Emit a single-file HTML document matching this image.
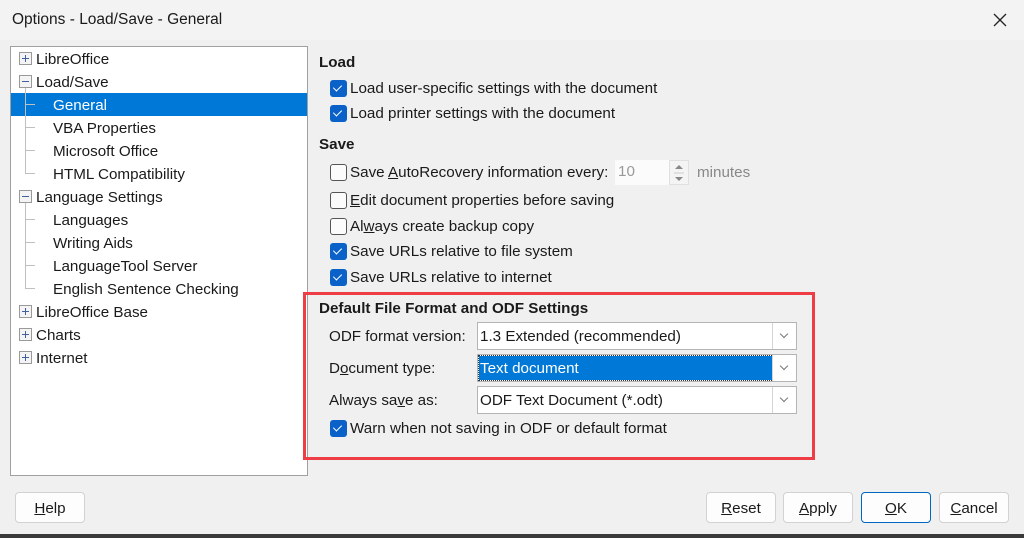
<!DOCTYPE html>
<html><head><style>
*{box-sizing:border-box;margin:0;padding:0}
body{width:1024px;height:538px;background:#f0f0f0;font-family:"Liberation Sans",sans-serif;font-size:15.2px;color:#1a1a1a;position:relative;overflow:hidden}
.a{position:absolute;white-space:nowrap}
.title{left:12px;top:11px;font-size:15.5px;color:#1a1a1a}
.titlebar{position:absolute;left:0;top:0;width:1024px;height:40px;background:#f3f3f3}
.tree{position:absolute;left:10px;top:46px;width:298px;height:430px;background:#fff;border:1px solid #a0a0a0}
.row{position:absolute;height:23px;line-height:25px;white-space:nowrap}
.exp{position:absolute;left:8px;width:13px;height:13px;border:1px solid #9a9a9a;background:#f4f4f4}
.exp:before{content:"";position:absolute;left:2px;top:5px;width:7px;height:1px;background:#4060a0}
.exp.p:after{content:"";position:absolute;left:5px;top:2px;width:1px;height:7px;background:#4060a0}
.vl{position:absolute;left:14px;width:1px;background:#c0c0c0}
.hl{position:absolute;left:14px;width:10px;height:1px;background:#c0c0c0}
.cb{position:absolute;width:17px;height:17px;border-radius:3px}
.on{background:#0a62c8}
.on:after{content:"";position:absolute;left:5px;top:3px;width:4px;height:7px;border:solid #fff;border-width:0 1.5px 1.5px 0;transform:rotate(45deg)}
.off{border:1px solid #555;background:#fbfbfb}
.b{font-weight:bold}
.dd{position:absolute;left:477px;width:320px;height:28px;background:#fff;border:1px solid #b4b4b4}
.dd .t{position:absolute;left:2px;top:4px;line-height:20px}
.dd .btn{position:absolute;right:0;top:0;width:24px;height:26px;border-left:1px solid #d4d4d4;background:#fff}
.dd .btn:after{content:"";position:absolute;left:8px;top:8px;width:5px;height:5px;border:solid #777;border-width:0 1px 1px 0;transform:rotate(45deg)}
.pb{position:absolute;top:492px;height:31px;background:#fdfdfd;border:1px solid #d2d2d2;border-radius:4px;text-align:center;line-height:31px}
u{text-decoration:underline}
.r .a{margin-top:1px}
</style></head><body>
<div class="titlebar"></div>
<div class="a title">Options - Load/Save - General</div>
<svg class="a" style="left:992px;top:12px" width="16" height="16"><path d="M2 2L14 14M14 2L2 14" stroke="#222" stroke-width="1.3"/></svg>

<div class="tree">
 <div class="row" style="top:0;left:0;width:296px"><div class="exp p" style="top:5px"></div><span style="position:absolute;left:25px">LibreOffice</span></div>
 <div class="row" style="top:23px;left:0;width:296px"><div class="exp" style="top:5px"></div><span style="position:absolute;left:25px">Load/Save</span></div>
 <div class="row" style="top:46px;left:0;width:296px;background:#0078d7;color:#fff"><span style="position:absolute;left:42px">General</span></div>
 <div class="row" style="top:69px;left:42px">VBA Properties</div>
 <div class="row" style="top:92px;left:42px">Microsoft Office</div>
 <div class="row" style="top:115px;left:42px">HTML Compatibility</div>
 <div class="vl" style="top:41px;height:86px"></div>
 <div class="hl" style="top:57px"></div><div class="hl" style="top:80px"></div><div class="hl" style="top:103px"></div><div class="hl" style="top:126px"></div>
 <div class="row" style="top:138px;left:0;width:296px"><div class="exp" style="top:5px"></div><span style="position:absolute;left:25px">Language Settings</span></div>
 <div class="row" style="top:161px;left:42px">Languages</div>
 <div class="row" style="top:184px;left:42px">Writing Aids</div>
 <div class="row" style="top:207px;left:42px">LanguageTool Server</div>
 <div class="row" style="top:230px;left:42px">English Sentence Checking</div>
 <div class="vl" style="top:156px;height:86px"></div>
 <div class="hl" style="top:172px"></div><div class="hl" style="top:195px"></div><div class="hl" style="top:218px"></div><div class="hl" style="top:241px"></div>
 <div class="row" style="top:253px;left:0;width:296px"><div class="exp p" style="top:5px"></div><span style="position:absolute;left:25px">LibreOffice Base</span></div>
 <div class="row" style="top:276px;left:0;width:296px"><div class="exp p" style="top:5px"></div><span style="position:absolute;left:25px">Charts</span></div>
 <div class="row" style="top:299px;left:0;width:296px"><div class="exp p" style="top:5px"></div><span style="position:absolute;left:25px">Internet</span></div>
</div>

<div class="r">
<div class="a b" style="left:319px;top:53px">Load</div>
<div class="cb on" style="left:330px;top:80px"></div><div class="a" style="left:350px;top:79px">Load user-specific settings with the document</div>
<div class="cb on" style="left:330px;top:105px"></div><div class="a" style="left:350px;top:104px">Load printer settings with the document</div>
<div class="a b" style="left:319px;top:135px">Save</div>
<div class="cb off" style="left:330px;top:164px"></div><div class="a" style="left:350px;top:163px">Save <u>A</u>utoRecovery information every:</div>
<div class="a" style="left:615px;top:159px;width:54px;height:25px;background:#fbfbfb;color:#999;padding:3px 0 0 3px">10</div>
<div class="a" style="left:669px;top:159px;width:20px;height:25px;background:#f4f4f4;border:1px solid #e0e0e0"></div>
<svg class="a" style="left:673px;top:162px" width="12" height="20"><path d="M2 6L6 2L10 6Z" fill="#888"/><path d="M2 14L6 18L10 14Z" fill="#888"/><path d="M1 10H11" stroke="#ccc"/></svg>
<div class="a" style="left:697px;top:163px;color:#888">minutes</div>
<div class="cb off" style="left:330px;top:192px"></div><div class="a" style="left:350px;top:191px"><u>E</u>dit document properties before saving</div>
<div class="cb off" style="left:330px;top:218px"></div><div class="a" style="left:350px;top:217px">Al<u>w</u>ays create backup copy</div>
<div class="cb on" style="left:330px;top:243px"></div><div class="a" style="left:350px;top:242px">Save URLs relative to file system</div>
<div class="cb on" style="left:330px;top:269px"></div><div class="a" style="left:350px;top:268px">Save URLs relative to internet</div>

<div class="a" style="left:303px;top:292px;width:512px;height:168px;border:3px solid #ee3d45;margin-top:0"></div>
<div class="a b" style="left:319px;top:299px">Default File Format and ODF Settings</div>
<div class="a" style="left:329px;top:327px">ODF format version:</div>
<div class="dd" style="top:322px"><div class="t">1.3 Extended (recommended)</div><div class="btn"></div></div>
<div class="a" style="left:329px;top:359px">D<u>o</u>cument type:</div>
<div class="dd" style="top:354px"><div style="position:absolute;left:1px;top:1px;width:294px;height:24px;background:#0078d7;outline:1px dotted #333"></div><div class="t" style="color:#fff">Text document</div><div class="btn"></div></div>
<div class="a" style="left:329px;top:391px">Always sa<u>v</u>e as:</div>
<div class="dd" style="top:386px"><div class="t">ODF Text Document (*.odt)</div><div class="btn"></div></div>
<div class="cb on" style="left:330px;top:420px"></div><div class="a" style="left:350px;top:419px">Warn when not saving in ODF or default format</div>
</div>

<div class="pb" style="left:15px;width:70px"><u>H</u>elp</div>
<div class="pb" style="left:706px;width:70px"><u>R</u>eset</div>
<div class="pb" style="left:783px;width:70px"><u>A</u>pply</div>
<div class="pb" style="left:861px;width:70px;border-color:#0067c0"><u>O</u>K</div>
<div class="pb" style="left:939px;width:70px"><u>C</u>ancel</div>
<div class="a" style="left:0;top:534px;width:1024px;height:4px;background:#3a3a3a"></div>
</body></html>
